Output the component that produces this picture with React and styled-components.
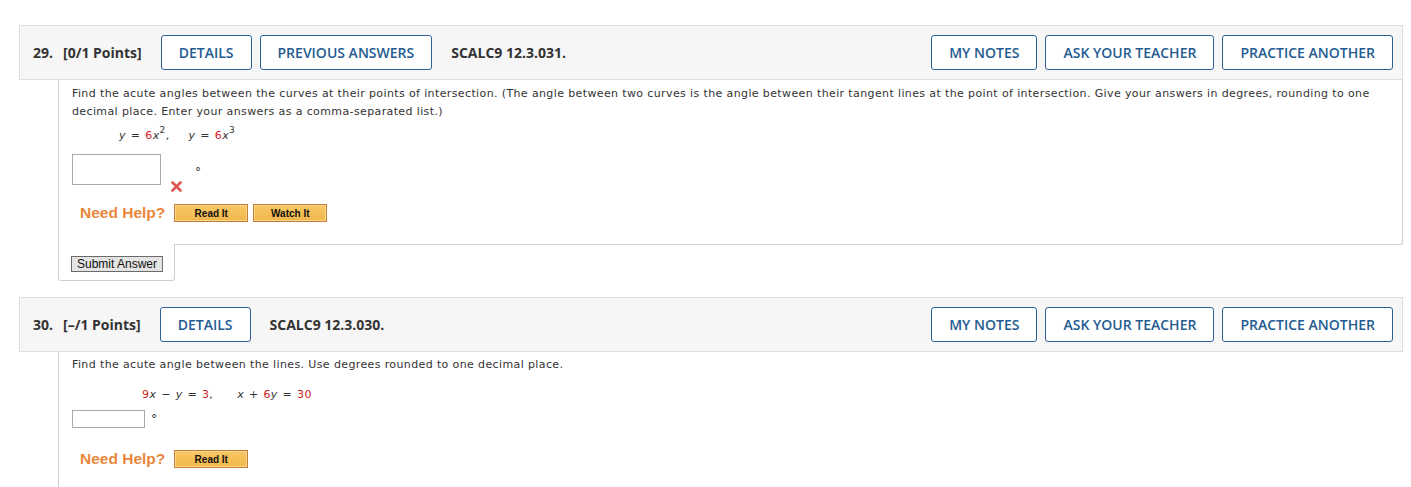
import React from "react";
import styled, { createGlobalStyle } from "styled-components";

const GlobalStyle = createGlobalStyle`
  html, body {
    margin: 0;
    padding: 0;
    background: #fff;
  }
  body {
    font-family: "DejaVu Sans", Verdana, sans-serif;
    color: #333;
  }
`;

const Page = styled.div`
  padding: 25px 8px 0 19px;
  width: 1384px;
`;

const Question = styled.section`
  margin-bottom: 16px;
`;

const Header = styled.div`
  display: flex;
  align-items: center;
  height: 53px;
  padding: 0 9px 0 13px;
  background: #f6f6f6;
  border: 1px solid #dedede;
  font-family: "Open Sans", sans-serif;
  font-weight: 700;
  font-size: 14px;
  color: #333;
`;

const Number = styled.span`
  margin-right: 10px;
`;

const Points = styled.span`
  margin-right: 19px;
`;

const Code = styled.span`
  margin-left: 19px;
`;

const Spacer = styled.div`
  flex: 1;
`;

const ButtonGroup = styled.div`
  display: flex;
  gap: 8px;
`;

const OutlineButton = styled.button`
  height: 35px;
  padding: 0 17px;
  background: #fff;
  border: 1px solid #2a6095;
  border-radius: 3px;
  color: #245b91;
  font-family: "Open Sans", sans-serif;
  font-weight: 600;
  font-size: 14px;
  cursor: pointer;
`;

const Body = styled.div`
  margin-left: 39px;
  padding: ${(p) => p.pad};
  border: 1px solid #cfcfcf;
  border-top: none;
  border-bottom: ${(p) => (p.open ? "none" : "1px solid #cfcfcf")};
  border-right: ${(p) => (p.open ? "none" : "1px solid #cfcfcf")};
  border-radius: 0 0 3px 0;
  font-size: 11px;
  letter-spacing: 0.38px;
  line-height: 18px;
  color: #333;
`;

const Tab = styled.div`
  display: flex;
  align-items: flex-start;
  margin: -1px 0 0 39px;
  width: 103px;
  padding: 12px 0 8px 12px;
  background: #fff;
  border: 1px solid #cfcfcf;
  border-top: none;
  border-radius: 0 0 3px 3px;
`;

const Prompt = styled.p`
  margin: 0;
`;

const Equation = styled.div`
  margin: ${(p) => p.margin};
  white-space: nowrap;
  word-spacing: 1px;
`;

const Sep = styled.span`
  margin-left: ${(p) => p.gap};
`;

const Var = styled.i`
  font-style: italic;
`;

const Red = styled.span`
  color: #d0201b;
`;

const Sup = styled.sup`
  font-size: 9px;
  line-height: 0;
  vertical-align: 6px;
`;

const AnswerRow = styled.div`
  display: flex;
  align-items: flex-start;
  margin-top: ${(p) => p.top};
`;

const AnswerInput = styled.input`
  box-sizing: border-box;
  width: ${(p) => p.w};
  height: ${(p) => p.h};
  margin: 0;
  border: 1px solid #a9a9a9;
  background: #fff;
`;

const Feedback = styled.div`
  display: flex;
  flex-direction: column;
  padding-top: 12px;
`;

const Degree = styled.span`
  margin: ${(p) => p.margin};
  font-size: 12px;
  line-height: 12px;
  color: #333;
`;

const WrongMark = styled.svg`
  margin: 3px 0 0 10px;
  width: 11px;
  height: 11px;
`;

const HelpRow = styled.div`
  display: flex;
  align-items: center;
  margin: ${(p) => p.margin};
  padding-left: 8px;
  letter-spacing: 0;
`;

const HelpLabel = styled.span`
  margin-right: 9px;
  font-family: "Liberation Sans", Arial, sans-serif;
  font-weight: 700;
  font-size: 15.5px;
  color: #e8873b;
`;

const HelpButton = styled.button`
  box-sizing: border-box;
  width: ${(p) => p.w};
  height: 18px;
  margin-right: 5px;
  padding: 0;
  background: linear-gradient(#f8c865, #f2b64a);
  border: 1px solid #c47c37;
  box-shadow: inset 0 0 0 1px #fbd98c;
  font-family: "Liberation Sans", Arial, sans-serif;
  font-weight: 700;
  font-size: 10px;
  color: #111;
  cursor: pointer;
`;

const SubmitButton = styled.button`
  height: 16px;
  padding: 0 5px;
  background: #e4e4e4;
  border: 1px solid #6b6b6b;
  font-family: "Liberation Sans", Arial, sans-serif;
  font-size: 12px;
  line-height: 14px;
  color: #111;
`;

const Cross = () => (
  <WrongMark viewBox="0 0 11 11">
    <path d="M1.5 1.5 L9.5 9.5 M9.5 1.5 L1.5 9.5" stroke="#e05454" strokeWidth="2.6" strokeLinecap="round" />
  </WrongMark>
);

const QuestionHeader = ({ number, points, code, previous }) => (
  <Header>
    <Number>{number}</Number>
    <Points>{points}</Points>
    <ButtonGroup>
      <OutlineButton>DETAILS</OutlineButton>
      {previous && <OutlineButton>PREVIOUS ANSWERS</OutlineButton>}
    </ButtonGroup>
    <Code>{code}</Code>
    <Spacer />
    <ButtonGroup>
      <OutlineButton>MY NOTES</OutlineButton>
      <OutlineButton>ASK YOUR TEACHER</OutlineButton>
      <OutlineButton>PRACTICE ANOTHER</OutlineButton>
    </ButtonGroup>
  </Header>
);

export default function App() {
  return (
    <Page>
      <GlobalStyle />
      <Question>
        <QuestionHeader number="29." points="[0/1 Points]" code="SCALC9 12.3.031." previous />
        <Body pad="5px 18px 22px 13px">
          <Prompt>
            Find the acute angles between the curves at their points of intersection. (The angle between two curves is
            the angle between their tangent lines at the point of intersection. Give your answers in degrees, rounding
            to one decimal place. Enter your answers as a comma-separated list.)
          </Prompt>
          <Equation margin="6px 0 0 47px">
            <Var>y</Var> = <Red>6</Red>
            <Var>x</Var>
            <Sup>2</Sup>,
            <Sep gap="19px">
              <Var>y</Var> = <Red>6</Red>
              <Var>x</Var>
              <Sup>3</Sup>
            </Sep>
          </Equation>
          <AnswerRow top="9px">
            <AnswerInput w="89px" h="31px" />
            <Feedback>
              <Degree margin="0 0 0 34px">°</Degree>
              <Cross />
            </Feedback>
          </AnswerRow>
          <HelpRow margin="12px 0 0 0">
            <HelpLabel>Need Help?</HelpLabel>
            <HelpButton w="74px">Read It</HelpButton>
            <HelpButton w="74px">Watch It</HelpButton>
          </HelpRow>
        </Body>
        <Tab>
          <SubmitButton>Submit Answer</SubmitButton>
        </Tab>
      </Question>
      <Question>
        <QuestionHeader number="30." points="[–/1 Points]" code="SCALC9 12.3.030." />
        <Body pad="4px 18px 20px 13px" open>
          <Prompt>Find the acute angle between the lines. Use degrees rounded to one decimal place.</Prompt>
          <Equation margin="12px 0 0 70px">
            <Red>9</Red>
            <Var>x</Var> − <Var>y</Var> = <Red>3</Red>,
            <Sep gap="24px">
              <Var>x</Var> + <Red>6</Red>
              <Var>y</Var> = <Red>30</Red>
            </Sep>
          </Equation>
          <AnswerRow top="6px">
            <AnswerInput w="73px" h="18px" />
            <Degree margin="3px 0 0 6px">°</Degree>
          </AnswerRow>
          <HelpRow margin="22px 0 0 0">
            <HelpLabel>Need Help?</HelpLabel>
            <HelpButton w="74px">Read It</HelpButton>
          </HelpRow>
        </Body>
      </Question>
    </Page>
  );
}
